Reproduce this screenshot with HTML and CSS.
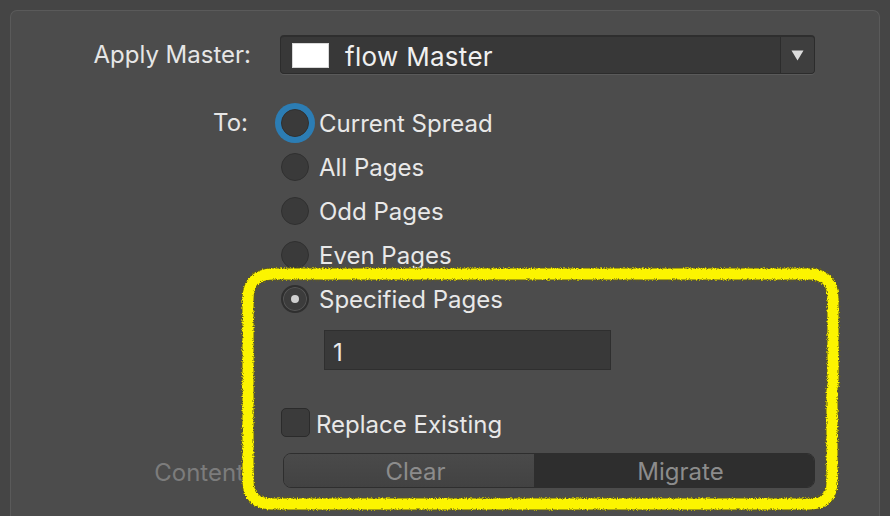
FILE: index.html
```html
<!DOCTYPE html>
<html>
<head>
<meta charset="utf-8">
<link rel="stylesheet" href="styles.css">
</head>
<body>
<div class="panel">
  <div class="row row-master">
    <div class="label">Apply Master:</div>
    <div class="dropdown">
      <span class="swatch"></span>
      <span class="dd-text">flow Master</span>
      <span class="dd-btn"><svg width="13" height="11" viewBox="0 0 13 11"><path d="M0.5 0.5 H12.5 L6.5 10.5 Z" fill="#dcdcdc"/></svg></span>
    </div>
  </div>
  <div class="row row-to">
    <div class="label label-to">To:</div>
    <div class="radios">
      <div class="radio-row"><span class="radio focused"></span><span class="radio-text">Current Spread</span></div>
      <div class="radio-row"><span class="radio"></span><span class="radio-text">All Pages</span></div>
      <div class="radio-row"><span class="radio"></span><span class="radio-text">Odd Pages</span></div>
      <div class="radio-row"><span class="radio"></span><span class="radio-text">Even Pages</span></div>
      <div class="radio-row"><span class="radio checked"><span class="dot"></span></span><span class="radio-text">Specified Pages</span></div>
      <div class="pages-input">1</div>
    </div>
  </div>
  <div class="row row-check">
    <div class="label"></div>
    <div class="check-row"><span class="checkbox"></span><span class="check-text">Replace Existing</span></div>
  </div>
  <div class="row row-content">
    <div class="label muted">Content</div>
    <div class="segmented">
      <div class="seg seg-clear">Clear</div>
      <div class="seg seg-migrate">Migrate</div>
    </div>
  </div>
</div>
<svg class="highlight" width="890" height="516" viewBox="0 0 890 516">
  <defs>
    <filter id="rough" x="-5%" y="-5%" width="110%" height="110%">
      <feTurbulence type="fractalNoise" baseFrequency="0.8" numOctaves="2" seed="3" result="noise"/>
      <feDisplacementMap in="SourceGraphic" in2="noise" scale="4" xChannelSelector="R" yChannelSelector="G"/>
    </filter>
  </defs>
  <g filter="url(#rough)" fill="none" stroke-linecap="round" stroke-linejoin="round">
    <path d="M833,386 V299 Q833,274 809,274 H272 Q248,275 248,299 V480 Q248,504 272,504 H809 Q833,504 832,480 V390" stroke="#5e5a1e" stroke-width="13"/>
    <path d="M833,386 V299 Q833,274 809,274 H272 Q248,275 248,299 V480 Q248,504 272,504 H809 Q833,504 832,480 V390" stroke="#fcf400" stroke-width="11"/>
  </g>
</svg>
</body>
</html>
```

FILE: styles.css
```css
* { box-sizing: border-box; }
html, body {
  margin: 0;
  padding: 0;
  width: 890px;
  height: 516px;
  overflow: hidden;
  background: #454545;
  font-family: Inter, "Open Sans", "Liberation Sans", sans-serif;
  color: #e8e8e8;
}
.panel {
  margin: 10px 0 0 10px;
  width: 870px;
  height: 506px;
  background: #4c4c4c;
  border: 1px solid #5a5a5a;
  border-bottom: none;
  border-radius: 7px 7px 0 0;
  padding: 24px 64px 0 0;
}
.row {
  display: flex;
  align-items: flex-start;
}
.label {
  width: 240px;
  flex: none;
  text-align: right;
  margin-right: 29px;
  font-size: 24px;
  line-height: 39px;
  color: #e6e6e6;
}
.label-to { line-height: 44px; padding-right: 3px; }
.label.muted { color: #7c7c7c; line-height: 35px; padding-top: 2px; padding-right: 7px; }

.dropdown {
  flex: 1;
  height: 39px;
  display: flex;
  align-items: center;
  background: #383838;
  border: 1px solid #2c2c2c;
  border-top: 2px solid #2e2e2e;
  border-radius: 4px;
  box-shadow: 0 1px 0 #5a5a5a;
}
.swatch {
  width: 37px;
  height: 25px;
  margin-left: 11px;
  background: #ffffff;
  border: 1px solid #d8d8d8;
  flex: none;
}
.dd-text {
  margin-left: 16px;
  font-size: 26px;
  letter-spacing: 0.3px;
  color: #f0f0f0;
  flex: 1;
  padding-top: 3px;
}
.dd-btn {
  width: 34px;
  align-self: stretch;
  display: flex;
  align-items: center;
  justify-content: center;
  background: #3e3e3e;
  border-left: 1px solid #2c2c2c;
  border-radius: 0 3px 3px 0;
}

.row-to { margin-top: 27px; }
.radios { display: flex; flex-direction: column; }
.radio-row {
  height: 44px;
  display: flex;
  align-items: center;
}
.radio {
  width: 28px;
  height: 28px;
  margin-left: 1px;
  border-radius: 50%;
  background: #3a3a3a;
  border: 1px solid #303030;
  flex: none;
  display: flex;
  align-items: center;
  justify-content: center;
}
.radio.focused {
  box-shadow: 0 0 0 6px #2c7db4;
}
.radio.checked {
  background: #3c3c3c;
  border: 2px solid #2f2f2f;
  box-shadow: inset 0 0 0 1px #555;
}
.dot {
  width: 8px;
  height: 8px;
  border-radius: 50%;
  background: #cfcfcf;
}
.radio-text {
  margin-left: 10px;
  font-size: 24px;
  color: #e8e8e8;
  padding-top: 1px;
}
.pages-input {
  margin: 9px 0 0 44px;
  width: 287px;
  height: 40px;
  background: #393939;
  border: 1px solid #2f2f2f;
  font-size: 24px;
  line-height: 38px;
  padding-left: 8px;
  padding-top: 3px;
  color: #ececec;
}

.row-check { margin-top: 38px; }
.check-row {
  display: flex;
  align-items: center;
  height: 29px;
}
.checkbox {
  width: 29px;
  height: 29px;
  margin-left: 1px;
  border-radius: 5px;
  background: #3b3b3b;
  border: 1px solid #2b2b2b;
  flex: none;
}
.check-text {
  margin-left: 6px;
  font-size: 24px;
  color: #e8e8e8;
  padding-top: 3px;
}

.row-content { margin-top: 16px; }
.segmented {
  margin-left: 3px;
  width: 532px;
  height: 35px;
  display: flex;
  border: 1px solid #2e2e2e;
  border-radius: 8px;
  overflow: hidden;
  font-size: 24px;
  color: #8c8c8c;
}
.seg {
  display: flex;
  align-items: center;
  justify-content: center;
  padding-left: 13px;
  padding-top: 2px;
}
.seg-clear {
  width: 250px;
  background: linear-gradient(#4a4a4a, #424242);
}
.seg-migrate {
  flex: 1;
  background: #2e2e2e;
}

.highlight {
  position: absolute;
  left: 0;
  top: 0;
  pointer-events: none;
}
```
